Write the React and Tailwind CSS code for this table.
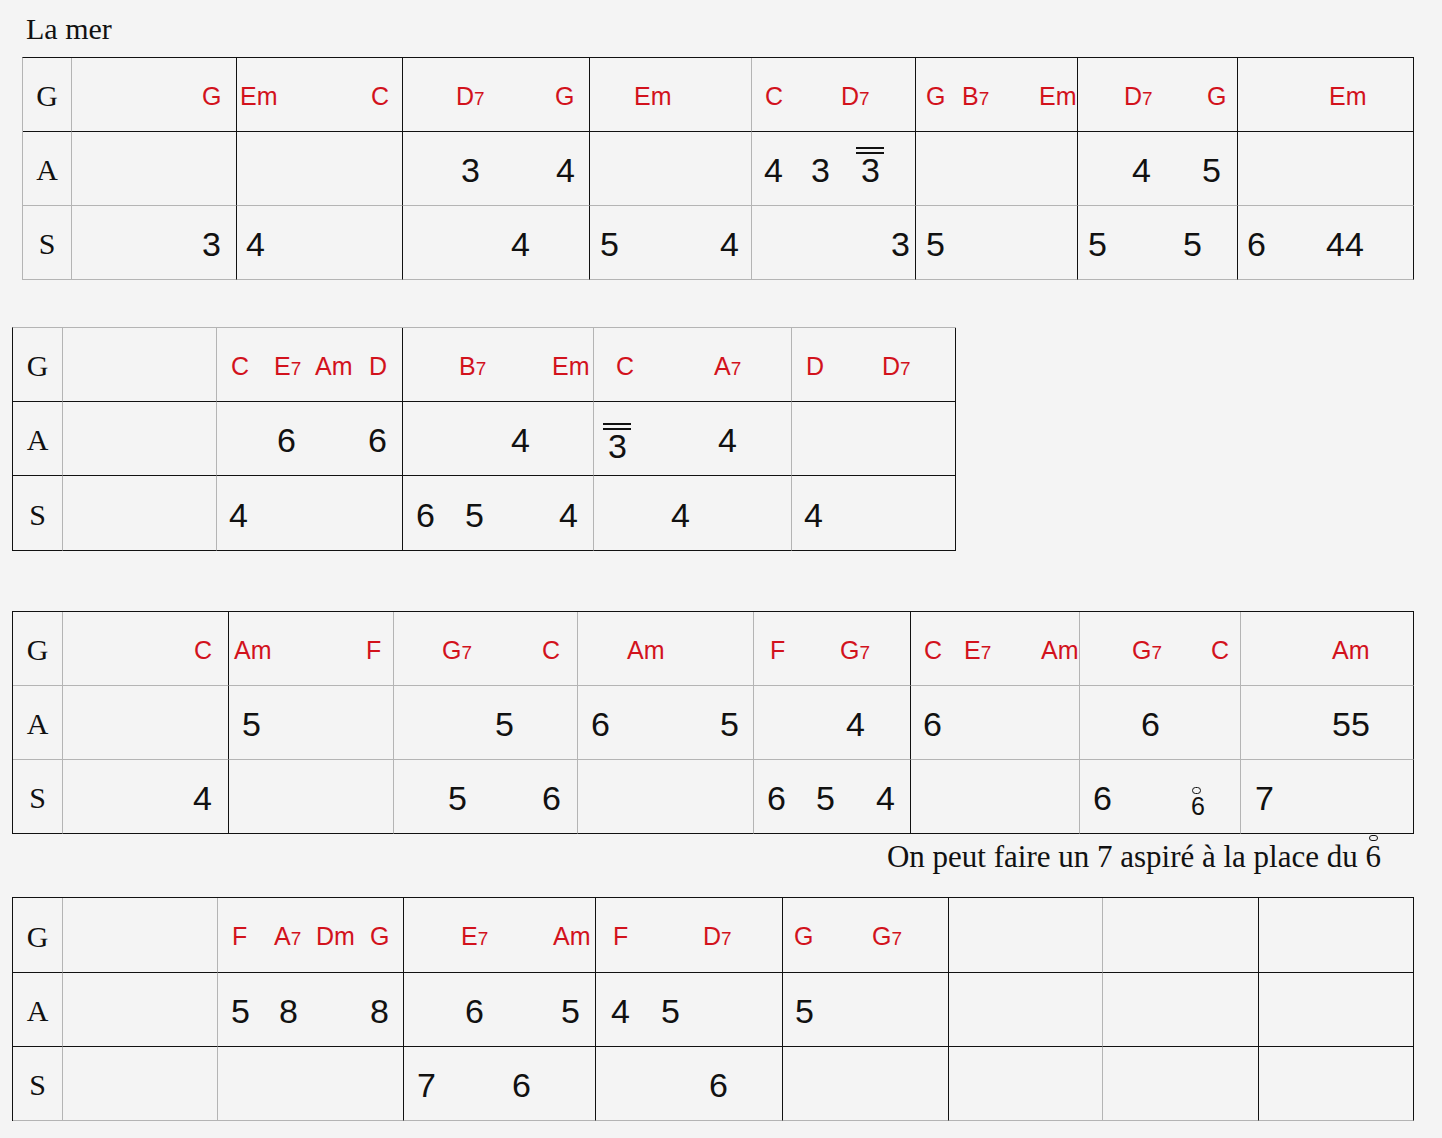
import React from 'react'

// chord grid sheet - "La mer"
const SANS = "font-['Liberation_Sans',Arial,sans-serif]"
const SERIF = "font-['Liberation_Serif','Times_New_Roman',serif]"

const VR = { B: 'border-r-[#111]', G: 'border-r-[#b4b4b4]' }
const HB = { B: 'border-b-[#111]', G: 'border-b-[#b4b4b4]' }
const TOP = { B: 'border-t-[#111]', G: 'border-t-[#b4b4b4]' }
const LEFT = { B: 'border-l-[#111]', G: 'border-l-[#b4b4b4]' }

const tables = [
  {
    wrap: 'ml-[22px]',
    grid: 'grid-cols-[49px_165px_166px_187px_162px_164px_162px_160px_176px] grid-rows-[74px_74px_74px]',
    lines: [22, 71, 236, 402, 589, 751, 915, 1077, 1237, 1413],
    tc: 'B', lc: 'G',
    vc: ['G', 'B', 'B', 'B', 'G', 'B', 'B', 'B', 'B'],
    hc: ['B', 'G', 'G'],
    rows: [
      ['G', [[203, 'G']], [[241, 'Em'], [372, 'C']], [[457, 'D7'], [556, 'G']], [[635, 'Em']], [[766, 'C'], [842, 'D7']], [[927, 'G'], [963, 'B7'], [1040, 'Em']], [[1125, 'D7'], [1208, 'G']], [[1330, 'Em']]],
      ['A', [], [], [[462, '3'], [557, '4']], [], [[765, '4'], [812, '3'], [862, '3=']], [], [[1133, '4'], [1203, '5']], []],
      ['S', [[203, '3']], [[247, '4']], [[512, '4']], [[601, '5'], [721, '4']], [[892, '3']], [[927, '5']], [[1089, '5'], [1184, '5']], [[1248, '6'], [1327, '44']]],
    ],
  },
  {
    wrap: 'ml-[12px] mt-[47px]',
    grid: 'grid-cols-[50px_154px_186px_191px_198px_164px] grid-rows-[74px_74px_75px]',
    lines: [12, 62, 216, 402, 593, 791, 955],
    tc: 'G', lc: 'B',
    vc: ['G', 'G', 'B', 'G', 'G', 'B'],
    hc: ['B', 'B', 'B'],
    rows: [
      ['G', [], [[232, 'C'], [275, 'E7'], [316, 'Am'], [370, 'D']], [[460, 'B7'], [553, 'Em']], [[617, 'C'], [715, 'A7']], [[807, 'D'], [883, 'D7']]],
      ['A', [], [[278, '6'], [369, '6']], [[512, '4']], [[609, '3=L'], [719, '4']], []],
      ['S', [], [[230, '4']], [[417, '6'], [466, '5'], [560, '4']], [[672, '4']], [[805, '4']]],
    ],
  },
  {
    wrap: 'ml-[12px] mt-[60px]',
    grid: 'grid-cols-[50px_166px_165px_184px_176px_157px_169px_161px_173px] grid-rows-[74px_74px_74px]',
    lines: [12, 62, 228, 393, 577, 753, 910, 1079, 1240, 1413],
    tc: 'B', lc: 'B',
    vc: ['G', 'B', 'G', 'G', 'G', 'B', 'G', 'G', 'B'],
    hc: ['G', 'G', 'B'],
    rows: [
      ['G', [[195, 'C']], [[235, 'Am'], [367, 'F']], [[443, 'G7'], [543, 'C']], [[628, 'Am']], [[771, 'F'], [841, 'G7']], [[925, 'C'], [965, 'E7'], [1042, 'Am']], [[1133, 'G7'], [1212, 'C']], [[1333, 'Am']]],
      ['A', [], [[243, '5']], [[496, '5']], [[592, '6'], [721, '5']], [[847, '4']], [[924, '6']], [[1142, '6']], [[1333, '55']]],
      ['S', [[194, '4']], [], [[449, '5'], [543, '6']], [], [[768, '6'], [817, '5'], [877, '4']], [], [[1094, '6'], [1192, '6o']], [[1256, '7']]],
    ],
  },
  {
    wrap: 'ml-[12px]',
    grid: 'grid-cols-[50px_155px_186px_192px_187px_166px_154px_156px_155px] grid-rows-[75px_74px_74px]',
    lines: [12, 62, 217, 403, 595, 782, 948, 1102, 1258, 1413],
    tc: 'B', lc: 'B',
    vc: ['G', 'G', 'B', 'B', 'B', 'B', 'G', 'B', 'B'],
    hc: ['B', 'B', 'G'],
    rows: [
      ['G', [], [[233, 'F'], [275, 'A7'], [317, 'Dm'], [371, 'G']], [[462, 'E7'], [554, 'Am']], [[614, 'F'], [704, 'D7']], [[795, 'G'], [873, 'G7']], [], [], []],
      ['A', [], [[232, '5'], [280, '8'], [371, '8']], [[466, '6'], [562, '5']], [[612, '4'], [662, '5']], [[796, '5']], [], [], []],
      ['S', [], [], [[418, '7'], [513, '6']], [[710, '6']], [], [], [], []],
    ],
  },
]

function Bar3({ low }) {
  return (
    <span className={`relative inline-block ${low ? 'translate-y-[6px]' : ''}`}>
      3
      <span className="absolute left-[-5px] right-[-4px] top-[-6px] h-[7px] border-y-2 border-[#111]" />
    </span>
  )
}

function RingSix() {
  return (
    <span className="relative inline-block text-[25px] translate-y-[5px]">
      6
      <span className="absolute left-[1px] top-[-7px] w-[9px] h-[7px] rounded-full border-[1.5px] border-[#111]" />
    </span>
  )
}

function Token({ t, row }) {
  if (t === '3=' || t === '3=L') return <Bar3 low={t === '3=L'} />
  if (t === '6o') return <RingSix />
  if (row === 0 && t.endsWith('7')) {
    return (
      <>
        {t.slice(0, -1)}
        <span className="text-[19px]">7</span>
      </>
    )
  }
  return t
}

function Items({ items, left, row }) {
  if (!items.length) return null
  return (
    <div
      className={`flex items-baseline whitespace-nowrap leading-none ${SANS} ${row === 0 ? 'text-[25px] text-[#d2121c]' : 'text-[34px] text-[#111]'}`}
      style={{ paddingLeft: items[0][0] - left - 2 }}
    >
      {items.map(([x, t], i) => (
        <span key={i} className="shrink-0" style={i < items.length - 1 ? { width: items[i + 1][0] - x } : undefined}>
          <Token t={t} row={row} />
        </span>
      ))}
    </div>
  )
}

function Grid({ tb }) {
  return (
    <div className={`grid w-fit border-l border-t ${tb.wrap} ${tb.grid} ${TOP[tb.tc]} ${LEFT[tb.lc]}`}>
      {tb.rows.map((row, r) =>
        row.map((cell, c) => (
          <div
            key={`${r}-${c}`}
            className={`flex items-center pt-[3px] border-r border-b ${VR[tb.vc[c]]} ${HB[tb.hc[r]]} ${c === 0 ? 'justify-center' : ''}`}
          >
            {c === 0 ? (
              <span className={`${SERIF} text-[30px] leading-none text-[#111]`}>{cell}</span>
            ) : (
              <Items items={cell} left={tb.lines[c]} row={r} />
            )}
          </div>
        ))
      )}
    </div>
  )
}

export default function App() {
  return (
    <div className="w-full min-h-[1138px] bg-[#f4f4f4] overflow-hidden">
      <div className={`h-[57px] pt-[14px] pl-[26px] ${SERIF} text-[30px] leading-none text-[#111]`}>La mer</div>
      <Grid tb={tables[0]} />
      <Grid tb={tables[1]} />
      <Grid tb={tables[2]} />
      <div className={`h-[63px] pt-[7px] pr-[61px] text-right ${SERIF} text-[31px] leading-none text-[#111] whitespace-nowrap`}>
        On peut faire un 7 aspiré à la place du{' '}
        <span className="relative inline-block">
          6
          <span className="absolute left-[3px] top-[-6px] w-[9px] h-[6px] rounded-full border-[1.5px] border-[#111]" />
        </span>
      </div>
      <Grid tb={tables[3]} />
    </div>
  )
}
